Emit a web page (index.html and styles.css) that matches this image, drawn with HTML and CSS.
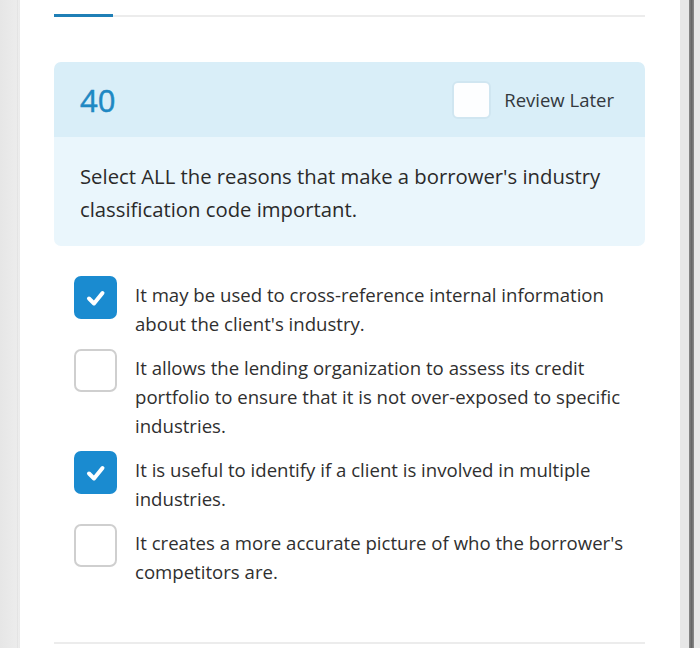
FILE: index.html
```html
<!DOCTYPE html>
<html lang="en">
<head>
<meta charset="utf-8">
<title>Question 40</title>
<link rel="stylesheet" href="styles.css">
</head>
<body>
<div class="frame">
  <div class="side side-left"></div>
  <main class="content">
    <div class="tabs"><div class="tab-active"></div></div>
    <section class="panel">
      <div class="panel-head">
        <span class="qnum">40</span>
        <label class="review"><span class="review-box"></span><span>Review Later</span></label>
      </div>
      <div class="panel-body">
        <p class="question">Select ALL the reasons that make a borrower's industry classification code important.</p>
      </div>
    </section>
    <ul class="options">
      <li class="option">
        <span class="box checked"><svg viewBox="0 0 43 43" width="43" height="43"><path d="M15 22.5 L20 27.5 L28.5 17" fill="none" stroke="#fff" stroke-width="4" stroke-linecap="round" stroke-linejoin="round"/></svg></span>
        <span class="opt-text">It may be used to cross-reference internal information about the client's industry.</span>
      </li>
      <li class="option">
        <span class="box"></span>
        <span class="opt-text">It allows the lending organization to assess its credit portfolio to ensure that it is not over-exposed to specific industries.</span>
      </li>
      <li class="option">
        <span class="box checked"><svg viewBox="0 0 43 43" width="43" height="43"><path d="M15 22.5 L20 27.5 L28.5 17" fill="none" stroke="#fff" stroke-width="4" stroke-linecap="round" stroke-linejoin="round"/></svg></span>
        <span class="opt-text">It is useful to identify if a client is involved in multiple industries.</span>
      </li>
      <li class="option">
        <span class="box"></span>
        <span class="opt-text">It creates a more accurate picture of who the borrower's competitors are.</span>
      </li>
    </ul>
    <div class="bottom-rule"></div>
  </main>
  <div class="side side-right"><div class="scroll-line"></div></div>
</div>
</body>
</html>
```
FILE: styles.css
```css
*, *::before, *::after {
  box-sizing: border-box;
}
html, body {
  margin: 0;
  padding: 0;
  height: 100%;
  background: #ffffff;
  font-family: "Open Sans", "Liberation Sans", sans-serif;
  color: #333333;
}
.frame {
  display: flex;
  width: 700px;
  height: 648px;
  overflow: hidden;
}
.side {
  flex: 0 0 20px;
  background: #e9e9e9;
}
.side-left {
  background: linear-gradient(to right, #e6e6e6, #ececec 85%, #e2e2e2 88%, #ededed 92%, #e9e9e9);
}
.side-right {
  display: flex;
  padding-left: 9px;
  background: #e7e7e7;
}
.scroll-line {
  width: 5px;
  background: linear-gradient(to right, #8a8a8a, #666 50%, #8a8a8a);
}
.content {
  flex: 1;
  padding: 0 35px 0 34px;
  display: flex;
  flex-direction: column;
}
.tabs {
  margin-top: 15px;
  height: 2px;
  background: #ececec;
  position: relative;
}
.tab-active {
  position: absolute;
  left: 0;
  top: -1px;
  width: 59px;
  height: 3px;
  background: #1f7fb6;
}
.panel {
  margin-top: 45px;
  border-radius: 7px;
  overflow: hidden;
}
.panel-head {
  height: 75px;
  background: #d9eef8;
  display: flex;
  align-items: center;
  justify-content: space-between;
  padding: 0 31px 0 26px;
}
.qnum {
  font-size: 31px;
  color: #1f88c3;
  line-height: 1;
  margin-top: 1px;
  -webkit-text-stroke: 0.5px #1f88c3;
}
.review {
  display: flex;
  align-items: center;
  gap: 13px;
  font-size: 18.5px;
  color: #33383d;
}
.review-box {
  width: 39px;
  height: 38px;
  background: #fdfeff;
  border: 2px solid #d0e6f1;
  border-radius: 6px;
  margin-top: 1px;
}
.panel-body {
  background: #eaf6fc;
  padding: 23px 26px 20px 26px;
}
.question {
  margin: 0;
  font-size: 20.3px;
  line-height: 33px;
  color: #2a2a2a;
}
.options {
  list-style: none;
  margin: 30px 0 0 0;
  padding: 0 20px;
  display: flex;
  flex-direction: column;
  gap: 11px;
}
.option {
  display: flex;
  align-items: flex-start;
  gap: 18px;
}
.box {
  flex: 0 0 auto;
  width: 43px;
  height: 43px;
  border: 2.5px solid #cfcfcf;
  border-radius: 7px;
  background: #fff;
}
.box.checked {
  border: none;
  background: #1a8bd0;
  display: flex;
}
.opt-text {
  margin-top: 4px;
  font-size: 18.6px;
  line-height: 29px;
  color: #2f2f2f;
}
.bottom-rule {
  margin-top: auto;
  margin-bottom: 4px;
  height: 2px;
  background: #ececec;
}
```
